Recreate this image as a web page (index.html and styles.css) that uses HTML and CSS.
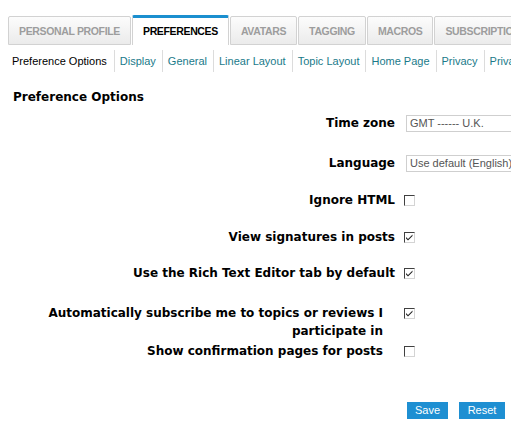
FILE: index.html
```html
<!DOCTYPE html>
<html>
<head>
<meta charset="utf-8">
<title>Preferences</title>
<link rel="stylesheet" href="styles.css">
</head>
<body>
<div class="page">
  <nav class="tabs">
    <a class="tab">Personal Profile</a>
    <a class="tab active">Preferences</a>
    <a class="tab">Avatars</a>
    <a class="tab">Tagging</a>
    <a class="tab">Macros</a>
    <a class="tab">Subscriptions</a>
  </nav>
  <nav class="subnav">
    <span class="sub current">Preference Options</span>
    <a class="sub">Display</a>
    <a class="sub">General</a>
    <a class="sub">Linear Layout</a>
    <a class="sub">Topic Layout</a>
    <a class="sub">Home Page</a>
    <a class="sub">Privacy</a>
    <a class="sub">Privacy Settings</a>
  </nav>

  <h2 class="section-title">Preference Options</h2>

  <div class="form">
    <div class="row r-timezone">
      <label class="lbl">Time zone</label>
      <div class="ctl"><div class="field">GMT ------ U.K.</div></div>
    </div>
    <div class="row r-language">
      <label class="lbl">Language</label>
      <div class="ctl"><div class="field">Use default (English)</div></div>
    </div>
    <div class="row r-html">
      <label class="lbl">Ignore HTML</label>
      <div class="ctl"><span class="cb"></span></div>
    </div>
    <div class="row r-sig">
      <label class="lbl">View signatures in posts</label>
      <div class="ctl"><span class="cb checked"><svg viewBox="0 0 11 11" width="11" height="11"><path d="M2 5 L4 7 L8.5 2.5 L8.5 4 L4 8.5 L2 6.5 Z" fill="#222"/></svg></span></div>
    </div>
    <div class="row r-rte">
      <label class="lbl">Use the Rich Text Editor tab by default</label>
      <div class="ctl"><span class="cb checked"><svg viewBox="0 0 11 11" width="11" height="11"><path d="M2 5 L4 7 L8.5 2.5 L8.5 4 L4 8.5 L2 6.5 Z" fill="#222"/></svg></span></div>
    </div>
    <div class="row r-sub top">
      <label class="lbl narrow">Automatically subscribe me to topics or reviews I participate in</label>
      <div class="ctl"><span class="cb checked"><svg viewBox="0 0 11 11" width="11" height="11"><path d="M2 5 L4 7 L8.5 2.5 L8.5 4 L4 8.5 L2 6.5 Z" fill="#222"/></svg></span></div>
    </div>
    <div class="row r-confirm">
      <label class="lbl narrow">Show confirmation pages for posts</label>
      <div class="ctl"><span class="cb"></span></div>
    </div>
  </div>

  <div class="actions">
    <button class="btn">Save</button>
    <button class="btn">Reset</button>
  </div>
</div>
</body>
</html>
```
FILE: styles.css
```css
html, body {
  margin: 0;
  padding: 0;
  background: #fff;
  overflow: hidden;
}
body {
  font-family: "Liberation Sans", Arial, sans-serif;
  color: #000;
}
.page {
  width: 511px;
  padding-top: 16px;
}

/* Tabs */
.tabs {
  display: flex;
  gap: 1px;
  padding-left: 8px;
  height: 29px;
  white-space: nowrap;
}
.tab {
  flex: none;
  box-sizing: border-box;
  height: 29px;
  padding: 0 10px;
  font: bold 10.5px/28px "Liberation Sans", Arial, sans-serif;
  letter-spacing: -0.35px;
  text-transform: uppercase;
  color: #9d9d9d;
  border: 1px solid #d2d2d2;
  border-radius: 2px 2px 0 0;
  background: linear-gradient(#fcfcfc, #ebebeb);
}
.tab.active {
  color: #000;
  background: #fff;
  border-color: #d2d2d2;
  border-top: 3px solid #1b8fcf;
  border-bottom: none;
  line-height: 26px;
  margin-top: -1px;
  height: 30px;
}

/* Sub navigation */
.subnav {
  display: flex;
  margin-top: 5px;
  padding-left: 6px;
  height: 22px;
  white-space: nowrap;
}
.sub {
  flex: none;
  padding: 0 6px 0 5px;
  font-size: 11px;
  line-height: 22px;
  color: #1a7a8a;
  border-left: 1px solid #dcdcdc;
}
.sub.current {
  color: #000;
  border-left: none;
  padding: 0 7px 0 6px;
}

/* Heading */
.section-title {
  margin: 17px 0 0 13px;
  font: bold 12px/16px "DejaVu Sans", Verdana, sans-serif;
  color: #000;
}

/* Form */
.form {
  margin-top: 9px;
}
.row {
  display: flex;
  align-items: center;
  min-height: 18px;
}
.row.top { align-items: flex-start; }
.r-language { margin-top: 22px; }
.r-html { margin-top: 19px; }
.r-sig { margin-top: 19px; }
.r-rte { margin-top: 18px; }
.r-sub { margin-top: 22px; }
.r-confirm { margin-top: 2px; }

.lbl {
  flex: none;
  box-sizing: border-box;
  width: 395px;
  padding-left: 40px;
  text-align: right;
  font: bold 12px/18px "DejaVu Sans", Verdana, sans-serif;
  color: #000;
}
.lbl.narrow { padding-right: 12px; }
.ctl {
  flex: none;
  padding-left: 9px;
  display: flex;
  align-items: center;
  height: 18px;
}
.field {
  box-sizing: border-box;
  width: 160px;
  height: 17px;
  margin-left: 2px;
  padding: 0 3px;
  border: 1px solid #cfcfcf;
  background: #fff;
  font-size: 11px;
  line-height: 15px;
  color: #555;
  white-space: nowrap;
  overflow: hidden;
}
.cb {
  display: block;
  box-sizing: border-box;
  width: 11px;
  height: 11px;
  border-top: 1px solid #404040;
  border-left: 1px solid #404040;
  border-right: 1px solid #d4d4d4;
  border-bottom: 1px solid #d4d4d4;
  background: #fff;
  position: relative;
}
.cb svg {
  position: absolute;
  left: -1px;
  top: -1px;
}

/* Buttons */
.actions {
  display: flex;
  justify-content: flex-end;
  gap: 11px;
  margin-top: 42px;
  padding-right: 6px;
}
.btn {
  height: 17px;
  padding: 0;
  border: none;
  background: #1e8fd2;
  color: #fff;
  font: 11px/17px "Liberation Sans", Arial, sans-serif;
}
.btn:first-child { width: 41px; }
.btn:last-child { width: 46px; }
```
